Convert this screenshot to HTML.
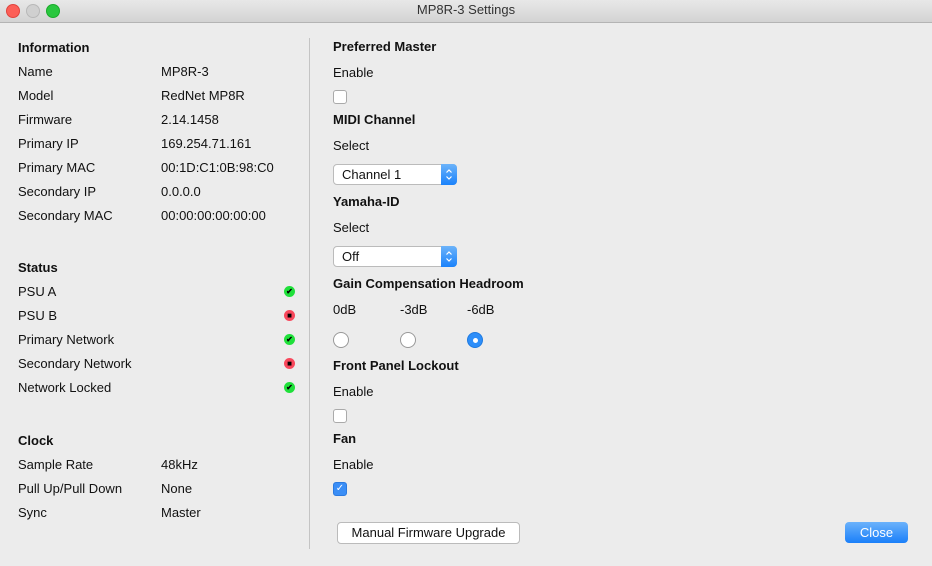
<!DOCTYPE html><html><head><style>
body{margin:0;width:932px;height:566px;background:#ececec;font-family:"Liberation Sans",sans-serif;font-size:13px;color:#111;position:relative;overflow:hidden}
.t{position:absolute;line-height:16px;white-space:nowrap}
.b{font-weight:bold}
.tb{position:absolute;left:0;top:0;width:932px;height:22px;background:linear-gradient(#e8e8e8,#d3d3d3);border-bottom:1px solid #b4b4b4}
.dot{position:absolute;top:4px;width:12px;height:12px;border-radius:50%}
.cb{position:absolute;left:333px;width:12px;height:12px;border:1px solid #aaa;border-radius:3px;background:#fff}
.pop{position:absolute;left:333px;width:122px;height:19px;border:1px solid #bbb;border-radius:4px;background:#fff}
.pop span{position:absolute;left:8px;top:1px;line-height:17px}
.pop i{position:absolute;right:-1px;top:-1px;width:16px;height:21px;background:linear-gradient(#6cb3fa,#1a82fb);border-radius:0 4px 4px 0}
.r{position:absolute;top:332px;width:14px;height:14px;border:1px solid #999;border-radius:50%;background:#fff}
.st{position:absolute;left:284px;width:11px;height:11px;border-radius:50%;font-size:8px;line-height:11px;text-align:center;color:#000;font-weight:bold}
.g{background:#1fe03a}.rd{background:#f8485c}
</style></head><body>
<div class="tb"></div>
<div class="dot" style="left:6px;background:#fc5f57;border:0.5px solid #e0443e"></div>
<div class="dot" style="left:26px;background:#d0d0d0;border:0.5px solid #b8b8b8"></div>
<div class="dot" style="left:46px;background:#2ac73f;border:0.5px solid #1aab2a"></div>
<div class="t" style="left:0;width:932px;text-align:center;top:2px;color:#333">MP8R-3 Settings</div>
<div style="position:absolute;left:309px;top:38px;width:1px;height:511px;background:#c4c4c4"></div>

<div class="t b" style="left:18px;top:40px">Information</div>
<div class="t" style="left:18px;top:64px">Name</div><div class="t" style="left:161px;top:64px">MP8R-3</div>
<div class="t" style="left:18px;top:88px">Model</div><div class="t" style="left:161px;top:88px">RedNet MP8R</div>
<div class="t" style="left:18px;top:112px">Firmware</div><div class="t" style="left:161px;top:112px">2.14.1458</div>
<div class="t" style="left:18px;top:136px">Primary IP</div><div class="t" style="left:161px;top:136px">169.254.71.161</div>
<div class="t" style="left:18px;top:160px">Primary MAC</div><div class="t" style="left:161px;top:160px">00:1D:C1:0B:98:C0</div>
<div class="t" style="left:18px;top:184px">Secondary IP</div><div class="t" style="left:161px;top:184px">0.0.0.0</div>
<div class="t" style="left:18px;top:208px">Secondary MAC</div><div class="t" style="left:161px;top:208px">00:00:00:00:00:00</div>

<div class="t b" style="left:18px;top:260px">Status</div>
<div class="t" style="left:18px;top:284px">PSU A</div><div class="st g" style="top:286px">✔</div>
<div class="t" style="left:18px;top:308px">PSU B</div><div class="st rd" style="top:310px">■</div>
<div class="t" style="left:18px;top:332px">Primary Network</div><div class="st g" style="top:334px">✔</div>
<div class="t" style="left:18px;top:356px">Secondary Network</div><div class="st rd" style="top:358px">■</div>
<div class="t" style="left:18px;top:380px">Network Locked</div><div class="st g" style="top:382px">✔</div>

<div class="t b" style="left:18px;top:433px">Clock</div>
<div class="t" style="left:18px;top:457px">Sample Rate</div><div class="t" style="left:161px;top:457px">48kHz</div>
<div class="t" style="left:18px;top:481px">Pull Up/Pull Down</div><div class="t" style="left:161px;top:481px">None</div>
<div class="t" style="left:18px;top:505px">Sync</div><div class="t" style="left:161px;top:505px">Master</div>

<div class="t b" style="left:333px;top:39px">Preferred Master</div>
<div class="t" style="left:333px;top:65px">Enable</div>
<div class="cb" style="top:90px"></div>
<div class="t b" style="left:333px;top:112px">MIDI Channel</div>
<div class="t" style="left:333px;top:138px">Select</div>
<div class="pop" style="top:164px"><span>Channel 1</span><i><svg width="16" height="21"><path d="M5.5 8.5L8 6L10.5 8.5M5.5 12.5L8 15L10.5 12.5" stroke="#fff" stroke-width="1.2" fill="none"/></svg></i></div>
<div class="t b" style="left:333px;top:194px">Yamaha-ID</div>
<div class="t" style="left:333px;top:220px">Select</div>
<div class="pop" style="top:246px"><span>Off</span><i><svg width="16" height="21"><path d="M5.5 8.5L8 6L10.5 8.5M5.5 12.5L8 15L10.5 12.5" stroke="#fff" stroke-width="1.2" fill="none"/></svg></i></div>
<div class="t b" style="left:333px;top:276px">Gain Compensation Headroom</div>
<div class="t" style="left:333px;top:302px">0dB</div>
<div class="t" style="left:400px;top:302px">-3dB</div>
<div class="t" style="left:467px;top:302px">-6dB</div>
<div class="r" style="left:333px"></div>
<div class="r" style="left:400px"></div>
<div class="r" style="left:467px;background:#2d8ef9;border-color:#1f7ae0"><div style="position:absolute;left:5px;top:5px;width:5px;height:5px;border-radius:50%;background:#fff"></div></div>
<div class="t b" style="left:333px;top:358px">Front Panel Lockout</div>
<div class="t" style="left:333px;top:384px">Enable</div>
<div class="cb" style="top:409px"></div>
<div class="t b" style="left:333px;top:431px">Fan</div>
<div class="t" style="left:333px;top:457px">Enable</div>
<div class="cb" style="top:482px;background:#3a8ef6;border-color:#2a7ae0;color:#fff;font-size:10px;line-height:12px;text-align:center">✓</div>

<div style="position:absolute;left:337px;top:522px;width:181px;height:20px;border:1px solid #bbb;border-radius:4px;background:#fff;text-align:center;line-height:20px">Manual Firmware Upgrade</div>
<div style="position:absolute;left:845px;top:522px;width:63px;height:21px;border-radius:4px;background:linear-gradient(#6bb2fb,#1a7ff9);color:#fff;text-align:center;line-height:21px">Close</div>
</body></html>
